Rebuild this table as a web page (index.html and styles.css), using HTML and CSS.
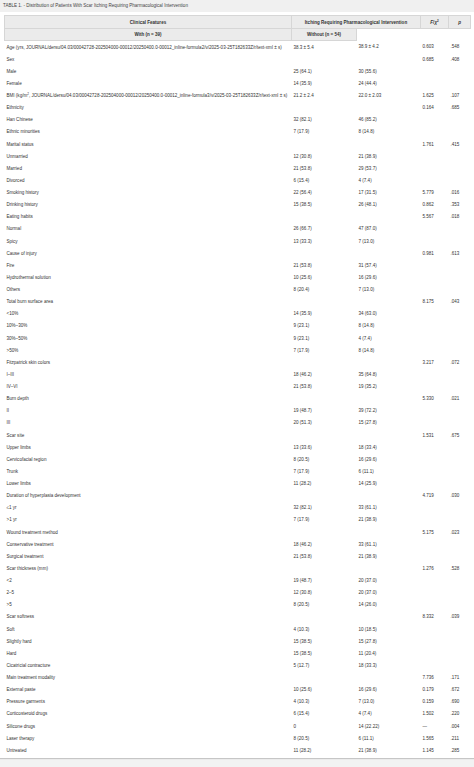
FILE: index.html
```html
<!DOCTYPE html>
<html>
<head>
<meta charset="utf-8">
<link rel="stylesheet" href="styles.css">
</head>
<body>
<div class="title">TABLE 1. - Distribution of Patients With Scar Itching Requiring Pharmacological Intervention</div>
<div class="wrap">
<table class="tbl">
<colgroup><col class="c1"><col class="c2"><col class="c3"><col class="c4"><col class="c5"></colgroup>
<thead>
<tr class="h1"><th>Clinical Features</th><th colspan="2">Itching Requiring Pharmacological Intervention</th><th><i>F</i>/<i>χ</i><sup>2</sup></th><th><i>p</i></th></tr>
<tr class="h2"><th>With (n = 39)</th><th>Without (n = 54)</th></tr>
</thead>
<tbody>
<tr><td>Age (yrs, JOURNAL/dersu/04.03/00042728-202504000-00012/20250400.0-00012_inline-formula2/v/2025-03-25T182633Z/r/text-xml ± s)</td><td>38.3 ± 5.4</td><td>38.9 ± 4.2</td><td>0.603</td><td>.548</td></tr>
<tr><td>Sex</td><td></td><td></td><td>0.685</td><td>.408</td></tr>
<tr><td>Male</td><td>25 (64.1)</td><td>30 (55.6)</td><td></td><td></td></tr>
<tr><td>Female</td><td>14 (35.9)</td><td>24 (44.4)</td><td></td><td></td></tr>
<tr><td>BMI (kg/m<sup>2</sup>, JOURNAL/dersu/04.03/00042728-202504000-00012/20250400.0-00012_inline-formula3/v/2025-03-25T182633Z/r/text-xml ± s)</td><td>21.2 ± 2.4</td><td>22.0 ± 2.03</td><td>1.625</td><td>.107</td></tr>
<tr><td>Ethnicity</td><td></td><td></td><td>0.164</td><td>.685</td></tr>
<tr><td>Han Chinese</td><td>32 (82.1)</td><td>46 (85.2)</td><td></td><td></td></tr>
<tr><td>Ethnic minorities</td><td>7 (17.9)</td><td>8 (14.8)</td><td></td><td></td></tr>
<tr><td>Marital status</td><td></td><td></td><td>1.761</td><td>.415</td></tr>
<tr><td>Unmarried</td><td>12 (30.8)</td><td>21 (38.9)</td><td></td><td></td></tr>
<tr><td>Married</td><td>21 (53.8)</td><td>29 (53.7)</td><td></td><td></td></tr>
<tr><td>Divorced</td><td>6 (15.4)</td><td>4 (7.4)</td><td></td><td></td></tr>
<tr><td>Smoking history</td><td>22 (56.4)</td><td>17 (31.5)</td><td>5.779</td><td>.016</td></tr>
<tr><td>Drinking history</td><td>15 (38.5)</td><td>26 (48.1)</td><td>0.862</td><td>.353</td></tr>
<tr><td>Eating habits</td><td></td><td></td><td>5.567</td><td>.018</td></tr>
<tr><td>Normal</td><td>26 (66.7)</td><td>47 (87.0)</td><td></td><td></td></tr>
<tr><td>Spicy</td><td>13 (33.3)</td><td>7 (13.0)</td><td></td><td></td></tr>
<tr><td>Cause of injury</td><td></td><td></td><td>0.981</td><td>.613</td></tr>
<tr><td>Fire</td><td>21 (53.8)</td><td>31 (57.4)</td><td></td><td></td></tr>
<tr><td>Hydrothermal solution</td><td>10 (25.6)</td><td>16 (29.6)</td><td></td><td></td></tr>
<tr><td>Others</td><td>8 (20.4)</td><td>7 (13.0)</td><td></td><td></td></tr>
<tr><td>Total burn surface area</td><td></td><td></td><td>8.175</td><td>.043</td></tr>
<tr><td>&lt;10%</td><td>14 (35.9)</td><td>34 (63.0)</td><td></td><td></td></tr>
<tr><td>10%–30%</td><td>9 (23.1)</td><td>8 (14.8)</td><td></td><td></td></tr>
<tr><td>30%–50%</td><td>9 (23.1)</td><td>4 (7.4)</td><td></td><td></td></tr>
<tr><td>&gt;50%</td><td>7 (17.9)</td><td>8 (14.8)</td><td></td><td></td></tr>
<tr><td>Fitzpatrick skin colors</td><td></td><td></td><td>3.217</td><td>.072</td></tr>
<tr><td>I–III</td><td>18 (46.2)</td><td>35 (64.8)</td><td></td><td></td></tr>
<tr><td>IV–VI</td><td>21 (53.8)</td><td>19 (35.2)</td><td></td><td></td></tr>
<tr><td>Burn depth</td><td></td><td></td><td>5.330</td><td>.021</td></tr>
<tr><td>II</td><td>19 (48.7)</td><td>39 (72.2)</td><td></td><td></td></tr>
<tr><td>III</td><td>20 (51.3)</td><td>15 (27.8)</td><td></td><td></td></tr>
<tr><td>Scar site</td><td></td><td></td><td>1.531</td><td>.675</td></tr>
<tr><td>Upper limbs</td><td>13 (33.6)</td><td>18 (33.4)</td><td></td><td></td></tr>
<tr><td>Cervicofacial region</td><td>8 (20.5)</td><td>16 (29.6)</td><td></td><td></td></tr>
<tr><td>Trunk</td><td>7 (17.9)</td><td>6 (11.1)</td><td></td><td></td></tr>
<tr><td>Lower limbs</td><td>11 (28.2)</td><td>14 (25.9)</td><td></td><td></td></tr>
<tr><td>Duration of hyperplasia development</td><td></td><td></td><td>4.719</td><td>.030</td></tr>
<tr><td>≤1 yr</td><td>32 (82.1)</td><td>33 (61.1)</td><td></td><td></td></tr>
<tr><td>&gt;1 yr</td><td>7 (17.9)</td><td>21 (38.9)</td><td></td><td></td></tr>
<tr><td>Wound treatment method</td><td></td><td></td><td>5.175</td><td>.023</td></tr>
<tr><td>Conservative treatment</td><td>18 (46.2)</td><td>33 (61.1)</td><td></td><td></td></tr>
<tr><td>Surgical treatment</td><td>21 (53.8)</td><td>21 (38.9)</td><td></td><td></td></tr>
<tr><td>Scar thickness (mm)</td><td></td><td></td><td>1.276</td><td>.528</td></tr>
<tr><td>&lt;2</td><td>19 (48.7)</td><td>20 (37.0)</td><td></td><td></td></tr>
<tr><td>2–5</td><td>12 (30.8)</td><td>20 (37.0)</td><td></td><td></td></tr>
<tr><td>&gt;5</td><td>8 (20.5)</td><td>14 (26.0)</td><td></td><td></td></tr>
<tr><td>Scar softness</td><td></td><td></td><td>8.332</td><td>.039</td></tr>
<tr><td>Soft</td><td>4 (10.3)</td><td>10 (18.5)</td><td></td><td></td></tr>
<tr><td>Slightly hard</td><td>15 (38.5)</td><td>15 (27.8)</td><td></td><td></td></tr>
<tr><td>Hard</td><td>15 (38.5)</td><td>11 (20.4)</td><td></td><td></td></tr>
<tr><td>Cicatricial contracture</td><td>5 (12.7)</td><td>18 (33.3)</td><td></td><td></td></tr>
<tr><td>Main treatment modality</td><td></td><td></td><td>7.736</td><td>.171</td></tr>
<tr><td>External paste</td><td>10 (25.6)</td><td>16 (29.6)</td><td>0.179</td><td>.672</td></tr>
<tr><td>Pressure garments</td><td>4 (10.3)</td><td>7 (13.0)</td><td>0.159</td><td>.690</td></tr>
<tr><td>Corticosteroid drugs</td><td>6 (15.4)</td><td>4 (7.4)</td><td>1.502</td><td>.220</td></tr>
<tr><td>Silicone drugs</td><td>0</td><td>14 (22.22)</td><td>—</td><td>.004</td></tr>
<tr><td>Laser therapy</td><td>8 (20.5)</td><td>6 (11.1)</td><td>1.565</td><td>.211</td></tr>
<tr><td>Untreated</td><td>11 (28.2)</td><td>21 (38.9)</td><td>1.145</td><td>.285</td></tr>
</tbody>
</table>
</div>
</body>
</html>
```
FILE: styles.css
```css
html, body {
  margin: 0;
  padding: 0;
}
body {
  background: #f2f2f2;
  font-family: "Liberation Sans", Arial, sans-serif;
  color: #333;
  font-size: 4.55px;
}
.title {
  height: 12px;
  line-height: 12px;
  padding-left: 3px;
  background: #f0f0f0;
  color: #444;
}
.wrap {
  background: #fff;
  padding: 3px 4px 2px 4px;
  box-shadow: 0 1px 1px rgba(0,0,0,0.18);
  margin-bottom: 9px;
}
.tbl {
  border-collapse: collapse;
  table-layout: fixed;
  width: 466px;
}
.c1 { width: 287px; }
.c2 { width: 65px; }
.c3 { width: 64px; }
.c4 { width: 28px; }
.c5 { width: 22px; }
.tbl th {
  background: #ebebeb;
  border: 1px solid #d6d6d6;
  font-weight: bold;
  text-align: center;
  color: #333;
  padding: 0 2px;
  white-space: nowrap;
}
.h1 { height: 13px; }
.h2 { height: 12px; }
.tbl sup {
  font-size: 3px;
  vertical-align: 1.6px;
  line-height: 0;
}
.tbl td {
  height: 12.14px;
  padding: 0 2px;
  white-space: nowrap;
  overflow: hidden;
  vertical-align: middle;
}
```
